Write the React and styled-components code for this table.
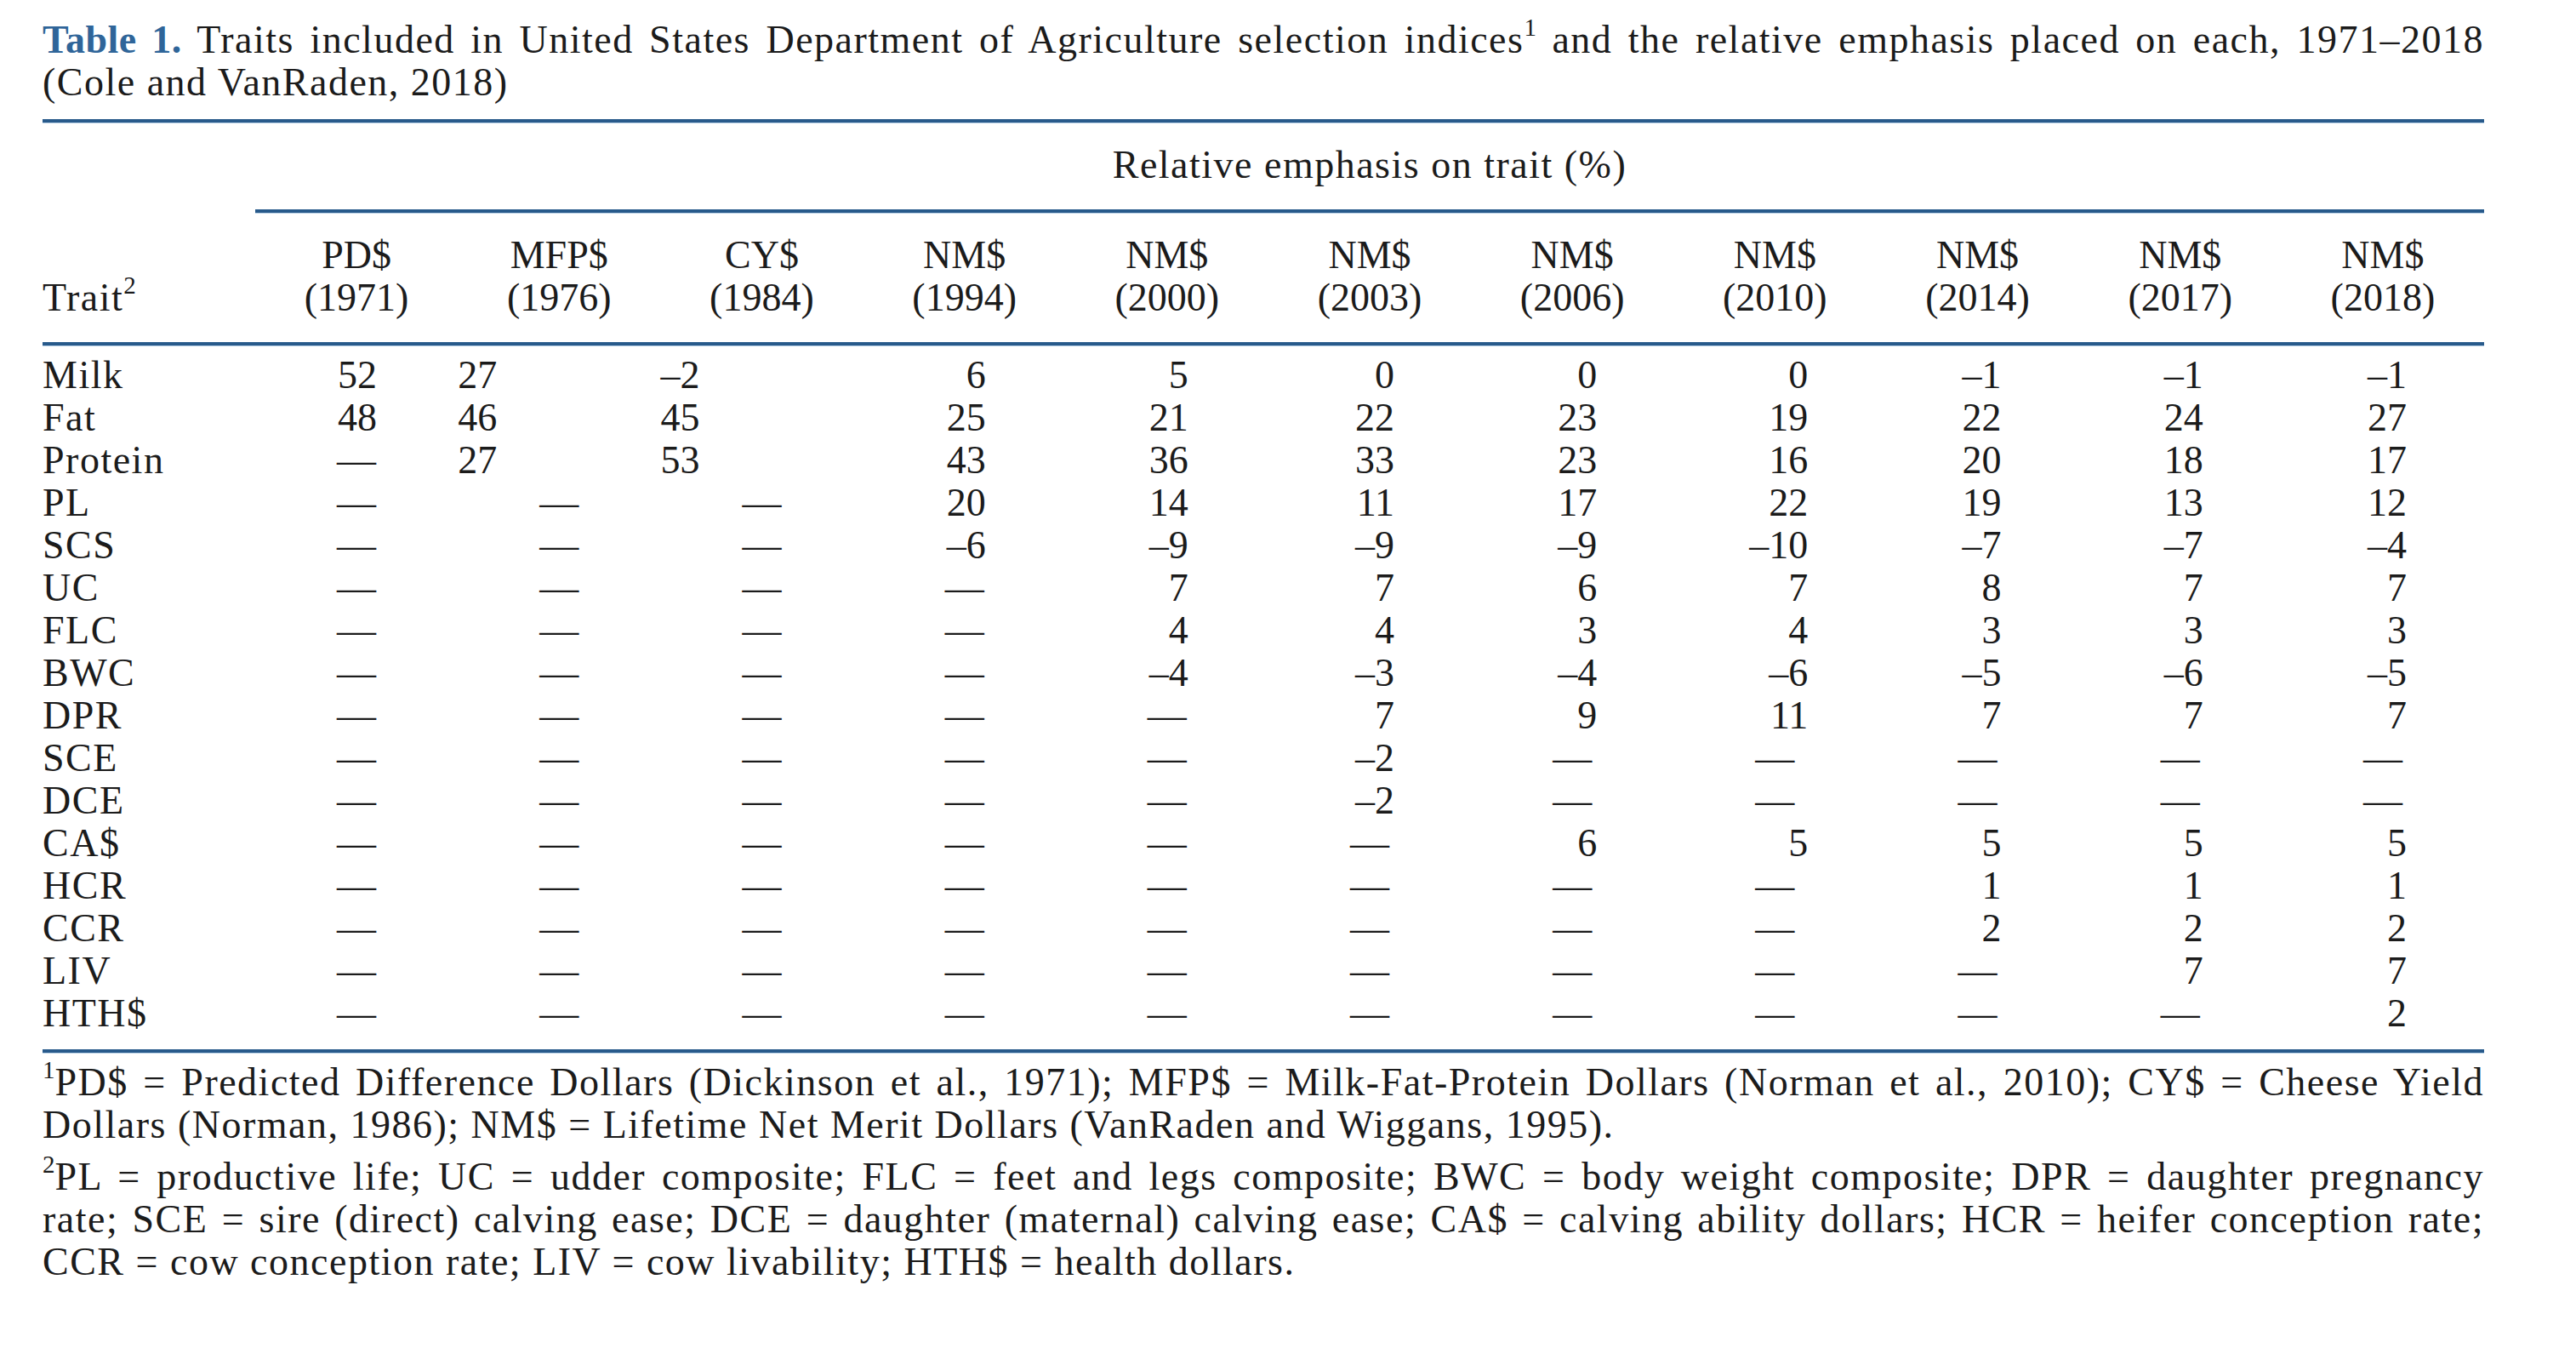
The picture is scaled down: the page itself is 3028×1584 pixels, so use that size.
import React from "react";
import styled, { createGlobalStyle } from "styled-components";

const Global = createGlobalStyle`
  html, body { margin: 0; padding: 0; background: #ffffff; }
  body {
    font-family: "Liberation Serif", "Times New Roman", serif;
    color: #1b1b1b;
  }
`;

const Page = styled.div`
  width: 3028px;
  box-sizing: border-box;
  padding: 22px 108px 40px 50px;
  font-size: 46px;
  line-height: 50px;
`;

const Caption = styled.div`
  letter-spacing: 1.5px;
`;

const Line = styled.div`
  text-align: ${(p) => (p.$justify ? "justify" : "left")};
  text-align-last: ${(p) => (p.$justify ? "justify" : "left")};
`;

const Label = styled.span`
  color: #2f6599;
  font-weight: bold;
  letter-spacing: 0.5px;
`;

const Sup = styled.span`
  font-size: 29px;
  line-height: 0;
  vertical-align: 20px;
  letter-spacing: 0;
`;

const Rule = styled.div`
  height: 4px;
  background: #285a8b;
  border-bottom: 1px solid #b9d1e6;
  margin: ${(p) => p.$top}px 0 ${(p) => p.$bottom}px ${(p) => p.$indent || 0}px;
`;

const GridRow = styled.div`
  display: grid;
  grid-template-columns: 250px repeat(11, 1fr);
  height: ${(p) => p.$lines * 50}px;
`;

const Spanner = styled.div`
  grid-column: 2 / -1;
  text-align: center;
  letter-spacing: 1.5px;
`;

const TraitHead = styled.div`
  align-self: end;
  letter-spacing: 1.5px;
`;

const ColHead = styled.div`
  text-align: center;
`;

const TraitName = styled.div`
  letter-spacing: 1.5px;
  white-space: nowrap;
`;

const Cell = styled.div`
  display: flex;
  justify-content: center;
  padding-right: ${(p) => p.$shift}px;
`;

const Num = styled.span`
  display: inline-block;
  width: ${(p) => p.$w}px;
  text-align: right;
  white-space: nowrap;
`;

const Notes = styled.div`
  letter-spacing: 1.5px;
`;

const Note = styled.div`
  margin-top: ${(p) => p.$gap}px;
`;

const columns = [
  ["PD$", "1971"],
  ["MFP$", "1976"],
  ["CY$", "1984"],
  ["NM$", "1994"],
  ["NM$", "2000"],
  ["NM$", "2003"],
  ["NM$", "2006"],
  ["NM$", "2010"],
  ["NM$", "2014"],
  ["NM$", "2017"],
  ["NM$", "2018"],
];

const numWidth = [44, 44, 44, 50, 50, 58, 58, 78, 56, 54, 56];
const numShift = [0, 194, 194, 0, 0, 0, 0, 0, 0, 0, 0];

const _ = null;
const rows = [
  ["Milk", ["52", "27", "–2", "6", "5", "0", "0", "0", "–1", "–1", "–1"]],
  ["Fat", ["48", "46", "45", "25", "21", "22", "23", "19", "22", "24", "27"]],
  ["Protein", [_, "27", "53", "43", "36", "33", "23", "16", "20", "18", "17"]],
  ["PL", [_, _, _, "20", "14", "11", "17", "22", "19", "13", "12"]],
  ["SCS", [_, _, _, "–6", "–9", "–9", "–9", "–10", "–7", "–7", "–4"]],
  ["UC", [_, _, _, _, "7", "7", "6", "7", "8", "7", "7"]],
  ["FLC", [_, _, _, _, "4", "4", "3", "4", "3", "3", "3"]],
  ["BWC", [_, _, _, _, "–4", "–3", "–4", "–6", "–5", "–6", "–5"]],
  ["DPR", [_, _, _, _, _, "7", "9", "11", "7", "7", "7"]],
  ["SCE", [_, _, _, _, _, "–2", _, _, _, _, _]],
  ["DCE", [_, _, _, _, _, "–2", _, _, _, _, _]],
  ["CA$", [_, _, _, _, _, _, "6", "5", "5", "5", "5"]],
  ["HCR", [_, _, _, _, _, _, _, _, "1", "1", "1"]],
  ["CCR", [_, _, _, _, _, _, _, _, "2", "2", "2"]],
  ["LIV", [_, _, _, _, _, _, _, _, _, "7", "7"]],
  ["HTH$", [_, _, _, _, _, _, _, _, _, _, "2"]],
];

export default function App() {
  return (
    <Page>
      <Global />
      <Caption>
        <Line $justify>
          <Label>Table 1.</Label> Traits included in United States Department of
          Agriculture selection indices<Sup>1</Sup> and the relative emphasis placed
          on each, 1971–2018
        </Line>
        <Line>(Cole and VanRaden, 2018)</Line>
      </Caption>

      <Rule $top={18} $bottom={24} />
      <GridRow $lines={1}>
        <Spanner>Relative emphasis on trait (%)</Spanner>
      </GridRow>
      <Rule $top={27} $bottom={24} $indent={250} />
      <GridRow $lines={2}>
        <TraitHead>
          Trait<Sup>2</Sup>
        </TraitHead>
        {columns.map(([name, year], i) => (
          <ColHead key={i}>
            {name}
            <br />({year})
          </ColHead>
        ))}
      </GridRow>
      <Rule $top={27} $bottom={9} />

      {rows.map(([trait, values]) => (
        <GridRow key={trait} $lines={1}>
          <TraitName>{trait}</TraitName>
          {values.map((v, i) =>
            v === null ? (
              <Cell key={i} $shift={0}>—</Cell>
            ) : (
              <Cell key={i} $shift={numShift[i]}>
                <Num $w={numWidth[i]}>{v}</Num>
              </Cell>
            )
          )}
        </GridRow>
      ))}

      <Rule $top={17} $bottom={9} />

      <Notes>
        <Note $gap={0}>
          <Line $justify>
            <Sup>1</Sup>PD$ = Predicted Difference Dollars (Dickinson et al., 1971);
            MFP$ = Milk-Fat-Protein Dollars (Norman et al., 2010); CY$ = Cheese Yield
          </Line>
          <Line>
            Dollars (Norman, 1986); NM$ = Lifetime Net Merit Dollars (VanRaden and
            Wiggans, 1995).
          </Line>
        </Note>
        <Note $gap={11}>
          <Line $justify>
            <Sup>2</Sup>PL = productive life; UC = udder composite; FLC = feet and legs
            composite; BWC = body weight composite; DPR = daughter pregnancy
          </Line>
          <Line $justify>
            rate; SCE = sire (direct) calving ease; DCE = daughter (maternal) calving
            ease; CA$ = calving ability dollars; HCR = heifer conception rate;
          </Line>
          <Line>CCR = cow conception rate; LIV = cow livability; HTH$ = health dollars.</Line>
        </Note>
      </Notes>
    </Page>
  );
}
